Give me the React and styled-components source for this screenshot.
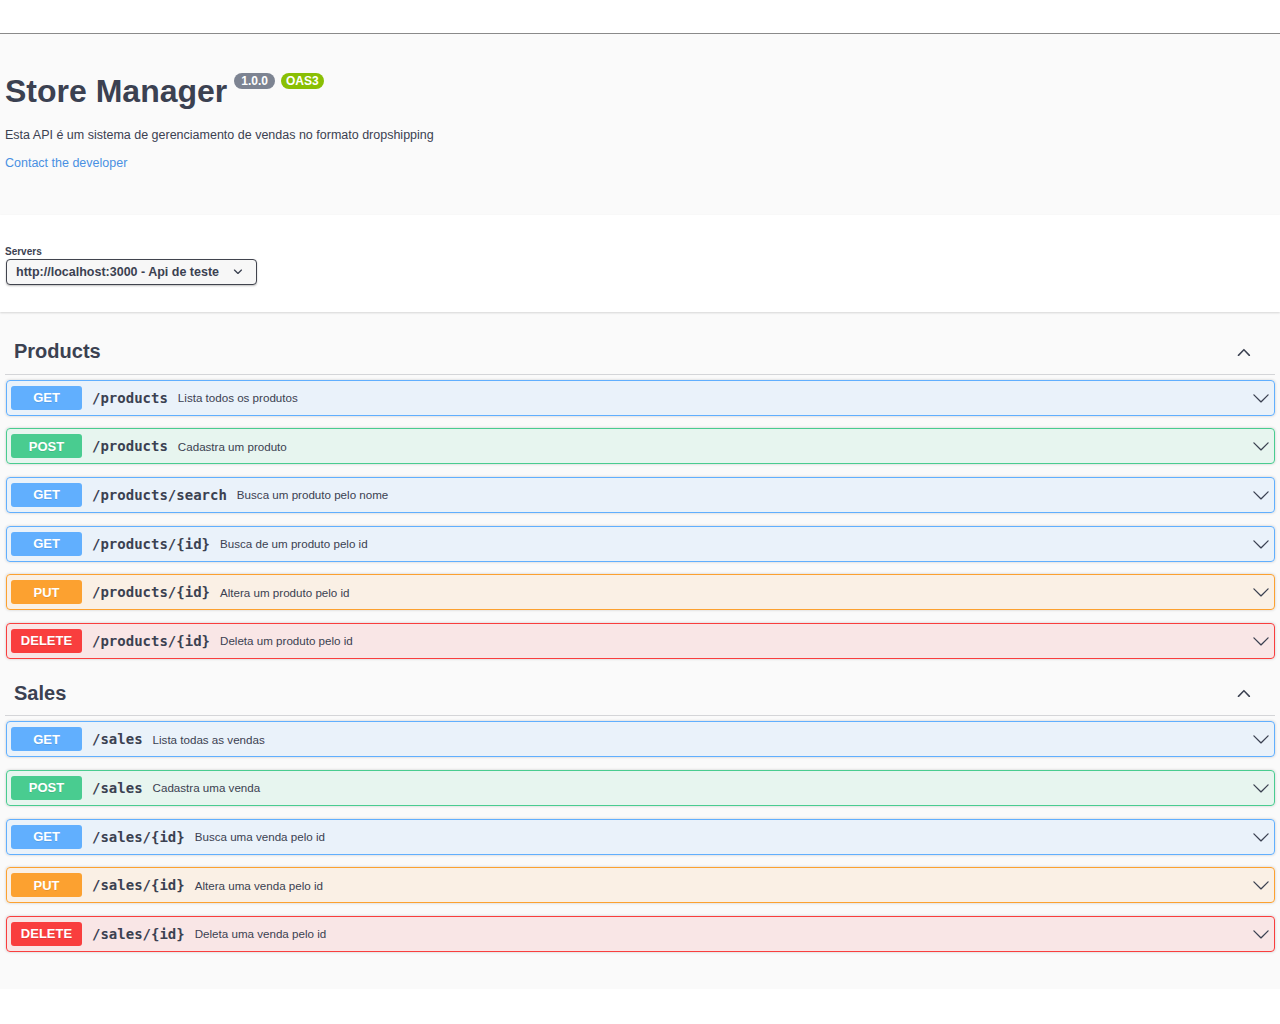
import React from 'react'
import styled, { createGlobalStyle } from 'styled-components'

const GlobalStyle = createGlobalStyle`
  body {
    margin: 0;
    background: #fff;
    font-family: "Liberation Sans", Arial, sans-serif;
    color: #3b4151;
  }
`

const methods = {
  GET: { color: '#61affe', bg: 'rgba(97,175,254,.1)' },
  POST: { color: '#49cc90', bg: 'rgba(73,204,144,.1)' },
  PUT: { color: '#fca130', bg: 'rgba(252,161,48,.1)' },
  DELETE: { color: '#f93e3e', bg: 'rgba(249,62,62,.1)' },
}

const TopGap = styled.div`
  height: 33px;
  border-bottom: 1px solid #8a8a8a;
`

const Info = styled.section`
  background: #fafafa;
  padding: 35px 5px 45px;
`

const Title = styled.h2`
  margin: 0;
  font-size: 32px;
  font-weight: 700;
  color: #3b4151;
  display: flex;
  align-items: flex-start;
  line-height: 1.4;
`

const Badge = styled.span`
  margin-top: 4px;
  margin-left: ${p => p.$first ? '7px' : '6px'};
  background: ${p => p.$bg};
  color: #fff;
  font-size: 12px;
  font-weight: 700;
  border-radius: 57px;
  padding: 1px ${p => p.$first ? '7px' : '5px'};
  line-height: 14px;
`

const Description = styled.p`
  margin: 14px 0 0;
  font-size: 12.5px;
  color: #3b4151;
`

const Contact = styled.a`
  display: block;
  margin-top: 14px;
  font-size: 12.5px;
  color: #4990e2;
  text-decoration: none;
`

const Schemes = styled.section`
  background: #fff;
  padding: 31px 5px 27px;
  box-shadow: 0 1px 2px 0 rgba(0, 0, 0, .15);
  position: relative;
`

const ServersLabel = styled.div`
  font-size: 10px;
  font-weight: 700;
  margin-bottom: 2px;
  color: #3b4151;
`

const Select = styled.div`
  display: inline-flex;
  align-items: center;
  gap: 14px;
  height: 24px;
  padding: 0 13px 0 9px;
  margin-left: 1px;
  border: 1.5px solid #41444e;
  border-radius: 4px;
  box-shadow: 0 1px 2px 0 rgba(0, 0, 0, .25);
  background: #f7f7f7;
  font-size: 12.5px;
  font-weight: 700;
  color: #3b4151;
`

const Operations = styled.main`
  background: #fafafa;
  padding: 18px 5px 25px;
`

const TagHeader = styled.div`
  display: flex;
  align-items: center;
  justify-content: space-between;
  height: 44px;
  padding: 0 22px 0 9px;
  border-bottom: 1px solid rgba(59, 65, 81, .2);
  margin-bottom: 5px;
`

const TagName = styled.h3`
  margin: 0;
  font-size: 20px;
  font-weight: 700;
  color: #3b4151;
`

const Opblock = styled.div`
  display: flex;
  align-items: center;
  height: 34px;
  margin: 0 0 12.6px 1px;
  padding: 0 4px 0 4px;
  border: 1px solid ${p => p.$color};
  background: ${p => p.$bg};
  border-radius: 4px;
  box-shadow: 0 0 3px rgba(0, 0, 0, .19);
`

const Method = styled.span`
  width: 71px;
  height: 24px;
  display: flex;
  align-items: center;
  justify-content: center;
  border-radius: 3px;
  background: ${p => p.$color};
  color: #fff;
  font-size: 13px;
  font-weight: 700;
  text-shadow: 0 1px 0 rgba(0, 0, 0, .1);
`

const Path = styled.span`
  margin-left: 10px;
  font-family: "DejaVu Sans Mono", monospace;
  font-size: 14px;
  font-weight: 700;
  color: #3b4151;
`

const Summary = styled.span`
  margin-left: 10px;
  font-size: 11.6px;
  color: #3b4151;
  flex: 1;
`

const Chevron = ({ up }) => (
  <svg width="18" height="18" viewBox="0 0 20 20" fill="#3b4151">
    {up
      ? <path d="M17.418 14.908c-.382.392-.97.392-1.352 0L10 8.684l-6.066 6.224c-.382.392-.97.392-1.352 0a1.004 1.004 0 0 1 0-1.388l6.742-6.92a.923.923 0 0 1 1.352 0l6.742 6.92c.374.384.374 1.004 0 1.388z" transform="scale(0.9) translate(1 1)" />
      : <path d="M17.418 6.109c.272-.268.709-.268.979 0s.271.701 0 .969l-7.908 7.83c-.27.268-.707.268-.979 0l-7.908-7.83c-.27-.268-.27-.701 0-.969.271-.268.709-.268.979 0L10 13.250l7.418-7.141z" />}
  </svg>
)

const tags = [
  {
    name: 'Products',
    ops: [
      ['GET', '/products', 'Lista todos os produtos'],
      ['POST', '/products', 'Cadastra um produto'],
      ['GET', '/products/search', 'Busca um produto pelo nome'],
      ['GET', '/products/{id}', 'Busca de um produto pelo id'],
      ['PUT', '/products/{id}', 'Altera um produto pelo id'],
      ['DELETE', '/products/{id}', 'Deleta um produto pelo id'],
    ],
  },
  {
    name: 'Sales',
    ops: [
      ['GET', '/sales', 'Lista todas as vendas'],
      ['POST', '/sales', 'Cadastra uma venda'],
      ['GET', '/sales/{id}', 'Busca uma venda pelo id'],
      ['PUT', '/sales/{id}', 'Altera uma venda pelo id'],
      ['DELETE', '/sales/{id}', 'Deleta uma venda pelo id'],
    ],
  },
]

const App = () => (
  <>
    <GlobalStyle />
    <TopGap />
    <Info>
      <Title>
        Store Manager
        <Badge $first $bg="#7d8492">1.0.0</Badge>
        <Badge $bg="#89bf04">OAS3</Badge>
      </Title>
      <Description>Esta API é um sistema de gerenciamento de vendas no formato dropshipping</Description>
      <Contact href="#">Contact the developer</Contact>
    </Info>
    <Schemes>
      <ServersLabel>Servers</ServersLabel>
      <Select>
        http://localhost:3000 - Api de teste
        <svg width="10" height="10" viewBox="0 0 20 20" fill="#3b4151">
          <path d="M13.418 7.859c.271-.268.709-.268.978 0 .27.268.272.701 0 .969l-3.908 3.830c-.27.268-.707.268-.979 0l-3.908-3.830c-.27-.267-.27-.701 0-.969.271-.268.709-.268.978 0L10 11l3.418-3.141z" transform="scale(1.8) translate(-4.5 -5)" />
        </svg>
      </Select>
    </Schemes>
    <Operations>
      {tags.map(tag => (
        <section key={tag.name}>
          <TagHeader>
            <TagName>{tag.name}</TagName>
            <Chevron up />
          </TagHeader>
          {tag.ops.map(([m, path, summary], i) => (
            <Opblock key={i} $color={methods[m].color} $bg={methods[m].bg}>
              <Method $color={methods[m].color}>{m}</Method>
              <Path>{path}</Path>
              <Summary>{summary}</Summary>
              <Chevron />
            </Opblock>
          ))}
        </section>
      ))}
    </Operations>
  </>
)

export default App
